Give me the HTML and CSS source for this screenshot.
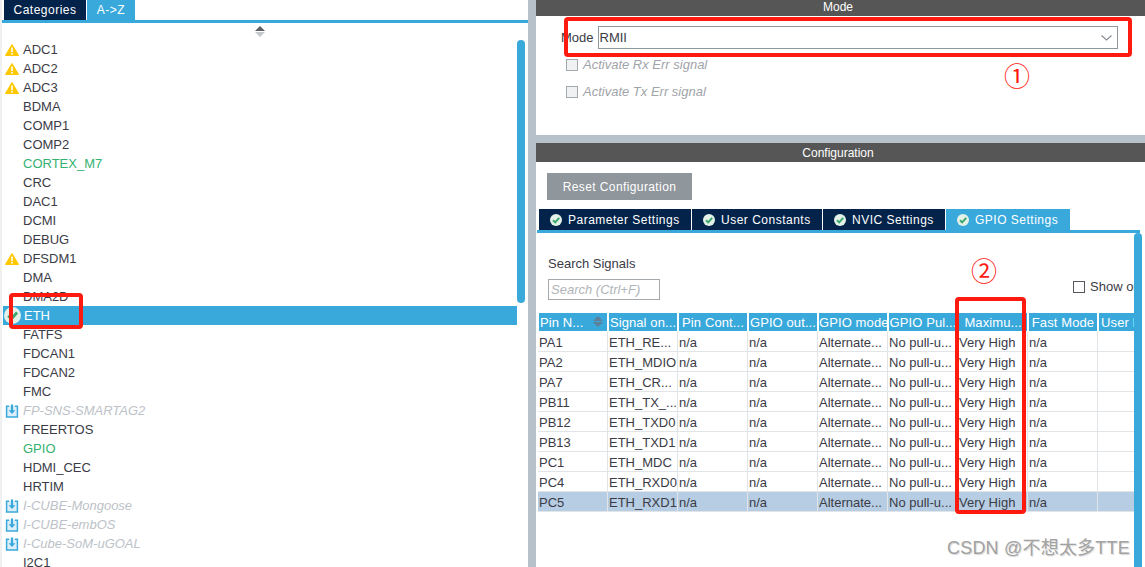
FILE: index.html
```html
<!DOCTYPE html>
<html lang="en">
<head>
    <meta charset="UTF-8">
    <meta name="viewport" content="width=device-width, initial-scale=1.0">
    <title>Pinout and Configuration</title>
    <link rel="stylesheet" href="styles.css">
</head>
<body>
    <svg class="defs" width="0" height="0">
        <symbol id="warn" viewBox="0 0 14 12">
            <path d="M7 .5 13.6 11.5H.4Z" fill="#ffc800" stroke="#ffc800" stroke-linejoin="round"/>
            <rect x="6.2" y="3.5" width="1.6" height="4.6" fill="#fff"/>
            <rect x="6.2" y="9" width="1.6" height="1.6" fill="#fff"/>
        </symbol>
        <symbol id="pack" viewBox="0 0 14 15">
            <path d="M4 2.5H1.2V13.8H12.8V2.5H10" fill="#dceef8" stroke="#39a9dc" stroke-width="1.6"/>
            <path d="M7 .5V9" stroke="#39a9dc" stroke-width="2.4" fill="none"/>
            <path d="M3.4 6.6 7 10.6 10.6 6.6Z" fill="#39a9dc"/>
        </symbol>
        <symbol id="check" viewBox="0 0 12 12">
            <circle cx="6" cy="6" r="6" fill="#e3f1e8"/>
            <path d="M3 6.2 5.2 8.4 9.2 3.9" fill="none" stroke="#3aa76d" stroke-width="2"/>
        </symbol>
    </svg>

    <div class="page">
        <div class="left">
            <div class="tabs">
                <div class="tab">Categories</div>
                <div class="tab tab-on">A-&gt;Z</div>
            </div>
            <div class="sort-row"><span class="sort"><i class="up"></i><i class="down"></i></span></div>
            <ul class="list">
                <li><svg class="ico"><use href="#warn"/></svg>ADC1</li>
                <li><svg class="ico"><use href="#warn"/></svg>ADC2</li>
                <li><svg class="ico"><use href="#warn"/></svg>ADC3</li>
                <li>BDMA</li>
                <li>COMP1</li>
                <li>COMP2</li>
                <li class="green">CORTEX_M7</li>
                <li>CRC</li>
                <li>DAC1</li>
                <li>DCMI</li>
                <li>DEBUG</li>
                <li><svg class="ico"><use href="#warn"/></svg>DFSDM1</li>
                <li>DMA</li>
                <li>DMA2D</li>
                <li class="active"><svg class="ico-big"><use href="#check"/></svg>ETH</li>
                <li>FATFS</li>
                <li>FDCAN1</li>
                <li>FDCAN2</li>
                <li>FMC</li>
                <li class="pack"><svg class="ico"><use href="#pack"/></svg>FP-SNS-SMARTAG2</li>
                <li>FREERTOS</li>
                <li class="green">GPIO</li>
                <li>HDMI_CEC</li>
                <li>HRTIM</li>
                <li class="pack"><svg class="ico"><use href="#pack"/></svg>I-CUBE-Mongoose</li>
                <li class="pack"><svg class="ico"><use href="#pack"/></svg>I-CUBE-embOS</li>
                <li class="pack"><svg class="ico"><use href="#pack"/></svg>I-Cube-SoM-uGOAL</li>
                <li>I2C1</li>
            </ul>
            <div class="scroll scroll-left"></div>
        </div>

        <div class="right">
            <div class="bar">Mode</div>
            <div class="mode">
                <div class="mode-row">
                    <label class="mode-label">Mode</label>
                    <div class="select">RMII
                        <svg class="chev" width="11" height="6" viewBox="0 0 11 6"><path d="M.5 .5 5.5 5 10.500 .5" fill="none" stroke="#8a8f94" stroke-width="1.2"/></svg>
                    </div>
                </div>
                <div class="opt"><span class="box"></span>Activate Rx Err signal</div>
                <div class="opt"><span class="box"></span>Activate Tx Err signal</div>
            </div>
            <div class="bar bar-config">Configuration</div>
            <div class="config">
                <button class="reset">Reset Configuration</button>
                <div class="subtabs">
                    <div class="subtab t1"><svg class="tick"><use href="#check"/></svg>Parameter Settings</div>
                    <div class="subtab t2"><svg class="tick"><use href="#check"/></svg>User Constants</div>
                    <div class="subtab t3"><svg class="tick"><use href="#check"/></svg>NVIC Settings</div>
                    <div class="subtab t4 subtab-on"><svg class="tick"><use href="#check"/></svg>GPIO Settings</div>
                </div>
                <div class="pane">
                    <div class="search-top">
                        <div>
                            <div class="search-label">Search Signals</div>
                            <div class="search">Search (Ctrl+F)</div>
                        </div>
                        <div class="show"><span class="show-box"></span>Show only Modified Pins</div>
                    </div>
                    <table>
                        <thead>
                            <tr>
                                <th class="first">Pin N...<span class="sort sort-th"><i class="up"></i><i class="down"></i></span></th>
                                <th>Signal on...</th>
                                <th>Pin Cont...</th>
                                <th>GPIO out...</th>
                                <th>GPIO mode</th>
                                <th>GPIO Pul...</th>
                                <th>Maximu...</th>
                                <th>Fast Mode</th>
                                <th>User Label</th>
                            </tr>
                        </thead>
                        <tbody>
                            <tr><td>PA1</td><td>ETH_RE...</td><td>n/a</td><td>n/a</td><td>Alternate...</td><td>No pull-u...</td><td>Very High</td><td>n/a</td><td></td></tr>
                            <tr><td>PA2</td><td>ETH_MDIO</td><td>n/a</td><td>n/a</td><td>Alternate...</td><td>No pull-u...</td><td>Very High</td><td>n/a</td><td></td></tr>
                            <tr><td>PA7</td><td>ETH_CR...</td><td>n/a</td><td>n/a</td><td>Alternate...</td><td>No pull-u...</td><td>Very High</td><td>n/a</td><td></td></tr>
                            <tr><td>PB11</td><td>ETH_TX_...</td><td>n/a</td><td>n/a</td><td>Alternate...</td><td>No pull-u...</td><td>Very High</td><td>n/a</td><td></td></tr>
                            <tr><td>PB12</td><td>ETH_TXD0</td><td>n/a</td><td>n/a</td><td>Alternate...</td><td>No pull-u...</td><td>Very High</td><td>n/a</td><td></td></tr>
                            <tr><td>PB13</td><td>ETH_TXD1</td><td>n/a</td><td>n/a</td><td>Alternate...</td><td>No pull-u...</td><td>Very High</td><td>n/a</td><td></td></tr>
                            <tr><td>PC1</td><td>ETH_MDC</td><td>n/a</td><td>n/a</td><td>Alternate...</td><td>No pull-u...</td><td>Very High</td><td>n/a</td><td></td></tr>
                            <tr><td>PC4</td><td>ETH_RXD0</td><td>n/a</td><td>n/a</td><td>Alternate...</td><td>No pull-u...</td><td>Very High</td><td>n/a</td><td></td></tr>
                            <tr class="sel"><td>PC5</td><td>ETH_RXD1</td><td>n/a</td><td>n/a</td><td>Alternate...</td><td>No pull-u...</td><td>Very High</td><td>n/a</td><td></td></tr>
                        </tbody>
                    </table>
                </div>
                <div class="scroll scroll-right"></div>
            </div>
        </div>

        <!-- red marks drawn over the screenshot -->
        <div class="mark mark-mode"></div>
        <div class="mark mark-eth"></div>
        <div class="mark mark-col"></div>
        <div class="num num-1">①</div>
        <div class="num num-2">②</div>
        <div class="watermark">CSDN @不想太多TTE</div>
    </div>
</body>
</html>
```

FILE: styles.css
```css
* {
    box-sizing: border-box;
}

html, body {
    margin: 0;
    height: 100%;
    overflow: hidden;
}

body {
    font-family: "Liberation Sans", Arial, sans-serif;
    font-size: 13px;
    color: #3b3b46;
    background: #fff;
}

.defs {
    display: block;
    height: 0;
}

.page {
    position: relative;
    display: flex;
    width: 1145px;
    height: 567px;
    overflow: hidden;
}

/* left column */
.left {
    position: relative;
    width: 536px;
    height: 567px;
    border-left: 2px solid #f0f0f0;
    border-right: 8px solid #b6c1c9;
    overflow: hidden;
}

.tabs {
    display: flex;
    gap: 1px;
    height: 23px;
    padding-left: 2px;
    border-bottom: 3px solid #39a9dc;
}

.tab {
    width: 82px;
    height: 20px;
    line-height: 20px;
    text-align: center;
    font-size: 12px;
    letter-spacing: .5px;
    color: #fff;
    background: #03234b;
}

.tab-on {
    width: 48px;
    background: #39a9dc;
}

.sort-row {
    display: flex;
    justify-content: center;
    height: 17px;
    width: 515px;
    padding-top: 3px;
}

.sort {
    display: inline-flex;
    flex-direction: column;
    gap: 1px;
}

.sort i {
    display: block;
    width: 0;
    height: 0;
    border-left: 5px solid transparent;
    border-right: 5px solid transparent;
}

.sort .up {
    border-bottom: 5px solid #5d6166;
}

.sort .down {
    border-top: 5px solid #c4c8cc;
}

.list {
    list-style: none;
    margin: 0;
    padding: 0;
    width: 515px;
}

.list li {
    position: relative;
    height: 19px;
    line-height: 19px;
    padding-left: 21px;
    white-space: nowrap;
}

.list .green {
    color: #35b26f;
}

.list .pack {
    font-style: italic;
    color: #bcc2c8;
}

.list .active {
    margin-left: 1px;
    padding-left: 21px;
    background: #39a9dc;
    color: #fff;
}

.ico {
    position: absolute;
    left: 3px;
    top: 3px;
    width: 14px;
    height: 14px;
}

.ico-big {
    position: absolute;
    left: 1px;
    top: 1px;
    width: 17px;
    height: 17px;
}

.scroll {
    position: absolute;
    width: 8px;
    background: #39a9dc;
    border-radius: 4px 4px 0 0;
}

.scroll-left {
    left: 515px;
    top: 40px;
    height: 263px;
    border-radius: 4px;
}

/* right column */
.right {
    flex: 1;
    display: flex;
    flex-direction: column;
    height: 567px;
}

.bar {
    height: 16px;
    line-height: 14px;
    padding-right: 5px;
    text-align: center;
    font-size: 12px;
    color: #fff;
    background: #555655;
}

.bar-config {
    height: 19px;
    line-height: 20px;
}

.mode {
    height: 127px;
    border-bottom: 8px solid #b6c1c9;
    padding: 10px 0 0 25px;
}

.mode-row {
    display: flex;
    align-items: center;
    gap: 4px;
    height: 23px;
    margin-bottom: 8px;
}

.select {
    position: relative;
    width: 520px;
    height: 23px;
    line-height: 21px;
    padding-left: 1px;
    border: 1px solid #8f969c;
}

.chev {
    position: absolute;
    right: 5px;
    top: 8px;
}

.opt {
    display: flex;
    align-items: center;
    gap: 5px;
    height: 15px;
    margin: 0 0 12px 5px;
    font-style: italic;
    color: #9fa4a9;
}

.box {
    width: 12px;
    height: 12px;
    background: #f0f1f3;
    border: 1px solid #a4a9ae;
}

.config {
    position: relative;
    flex: 1;
    padding: 11px 0 0 1px;
}

.reset {
    display: block;
    width: 145px;
    height: 27px;
    margin-left: 10px;
    padding: 0;
    border: 0;
    font-family: inherit;
    font-size: 12px;
    letter-spacing: .4px;
    color: #fff;
    background: #8f969c;
}

.subtabs {
    display: flex;
    gap: 1px;
    height: 24px;
    width: 603px;
    margin-top: 9px;
    padding-left: 2px;
    border-bottom: 3px solid #39a9dc;
}

.subtab {
    display: flex;
    align-items: center;
    height: 21px;
    padding-left: 11px;
    gap: 6px;
    font-size: 12px;
    letter-spacing: .5px;
    color: #fff;
    background: #03234b;
}

.t1 { width: 152px; }
.t2 { width: 130px; }
.t3 { width: 122px; }
.t4 { width: 124px; }

.subtab-on {
    background: #39a9dc;
}

.tick {
    width: 12px;
    height: 12px;
}

.pane {
    width: 596px;
    margin-left: 1px;
    overflow: hidden;
}

.search-top {
    position: relative;
    height: 79px;
    padding: 23px 0 0 10px;
}

.search-label {
    height: 23px;
    line-height: 15px;
}

.search {
    width: 112px;
    height: 21px;
    line-height: 19px;
    padding-left: 2px;
    font-style: italic;
    color: #b0b4b8;
    border: 1px solid #a4a9ae;
}

.show {
    position: absolute;
    left: 535px;
    top: 46px;
    display: flex;
    align-items: center;
    gap: 5px;
    white-space: nowrap;
}

.show-box {
    width: 12px;
    height: 12px;
    border: 1px solid #55585c;
}

table {
    border-collapse: separate;
    border-spacing: 0;
    table-layout: fixed;
    width: 630px;
}

th, td {
    width: 70px;
    height: 20px;
    padding: 0;
    font-weight: normal;
    white-space: nowrap;
    overflow: hidden;
}

th {
    position: relative;
    border: 1px solid #fff;
    text-align: center;
    letter-spacing: .1px;
    color: #fff;
    background: #39a9dc;
}

th.first {
    text-align: left;
    padding-left: 1px;
}

.sort-th {
    position: absolute;
    right: 4px;
    top: 3px;
}

.sort-th .up {
    border-bottom-color: #5d7f97;
}

.sort-th .down {
    border-top-color: #5d7f97;
}

td {
    padding: 1px 0 0 1px;
    border-right: 1px solid #e2e5e8;
    border-bottom: 1px solid #e2e5e8;
}

.sel td {
    background: #b6cde3;
}

.scroll-right {
    left: 598px;
    top: 71px;
    bottom: 0;
}

/* annotations */
.mark {
    position: absolute;
    border: 4px solid #ff1a10;
    border-radius: 4px;
}

.mark-mode {
    left: 564px;
    top: 17px;
    width: 568px;
    height: 40px;
}

.mark-eth {
    left: 9px;
    top: 293px;
    width: 74px;
    height: 36px;
}

.mark-col {
    left: 955px;
    top: 297px;
    width: 71px;
    height: 217px;
}

.num {
    position: absolute;
    font-family: "Noto Sans CJK SC", sans-serif;
    font-size: 26px;
    line-height: 26px;
    color: #ff1a10;
}

.num-1 {
    left: 1004px;
    top: 62px;
}

.num-2 {
    left: 971px;
    top: 257px;
}

.watermark {
    position: absolute;
    left: 947px;
    top: 537px;
    font-family: "Liberation Sans", "Noto Sans CJK SC", sans-serif;
    font-size: 18px;
    line-height: 22px;
    letter-spacing: .2px;
    white-space: nowrap;
    color: #a2a2a2;
    text-shadow: 1px 1px 1px #d8d8d8;
}
```
